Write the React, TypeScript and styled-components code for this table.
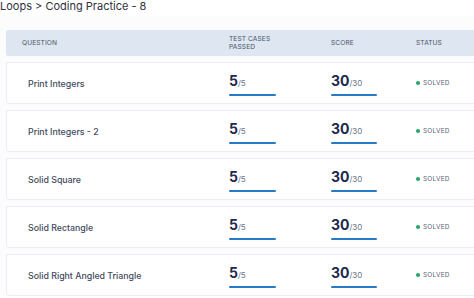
import React from "react";
import styled, { createGlobalStyle } from "styled-components";

const GlobalStyle = createGlobalStyle`
  html, body {
    margin: 0;
    padding: 0;
    background: #ffffff;
    overflow: hidden;
  }
  body {
    font-family: Inter, "Noto Sans", "Liberation Sans", sans-serif;
    -webkit-font-smoothing: antialiased;
  }
`;

const Page = styled.div`
  width: 490px;
  display: flex;
  flex-direction: column;
`;

const Breadcrumb = styled.div`
  font-size: 11px;
  line-height: 12px;
  height: 16px;
  color: #2e3140;
`;

const Board = styled.div`
  background: #fcfcfd;
  padding: 14px 0 0 6px;
  display: flex;
  flex-direction: column;
  gap: 6px;
`;

const columns = "201px 102px 85px 1fr";

const HeaderBar = styled.div`
  display: grid;
  grid-template-columns: ${columns};
  align-items: center;
  height: 26px;
  background: #dee6f1;
  border-radius: 2px;
  padding-left: 22px;
  box-sizing: border-box;
`;

const HeaderCell = styled.div<{ $shift?: number }>`
  font-size: 6.6px;
  line-height: 8.5px;
  letter-spacing: 0.1px;
  text-transform: uppercase;
  color: #465366;
  margin-left: ${(p) => p.$shift ?? 0}px;
`;

const Card = styled.div`
  display: grid;
  grid-template-columns: ${columns};
  align-items: center;
  height: 42px;
  box-sizing: border-box;
  background: #ffffff;
  border: 1px solid #e9edf3;
  border-radius: 3px;
  padding-left: 21px;
`;

const Title = styled.div`
  font-size: 8.8px;
  font-weight: 500;
  color: #3f4a5e;
`;

const Metric = styled.div`
  display: flex;
  flex-direction: column;
  align-items: flex-start;
  padding-top: 4px;
`;

const Value = styled.div`
  color: #1e2a4e;
  line-height: 12px;
  white-space: nowrap;
`;

const Big = styled.span`
  font-size: 14px;
  font-weight: 700;
`;

const Small = styled.span`
  font-size: 8px;
  color: #6a7385;
`;

const Bar = styled.div<{ $width: number }>`
  width: ${(p) => p.$width}px;
  height: 2px;
  margin-top: 5px;
  background: #2a79c4;
  border-radius: 1px;
`;

const Status = styled.div`
  display: flex;
  align-items: center;
  gap: 3px;
  font-size: 6.5px;
  letter-spacing: 0.2px;
  color: #5b6477;
`;

const Dot = styled.span`
  width: 4px;
  height: 4px;
  border-radius: 50%;
  background: #22a46c;
`;

const questions = [
  "Print Integers",
  "Print Integers - 2",
  "Solid Square",
  "Solid Rectangle",
  "Solid Right Angled Triangle",
];

export default function App() {
  return (
    <>
      <GlobalStyle />
      <Page>
        <Breadcrumb>Loops &gt; Coding Practice - 8</Breadcrumb>
        <Board>
          <HeaderBar>
            <HeaderCell $shift={-6}>Question</HeaderCell>
            <HeaderCell>
              Test Cases
              <br />
              Passed
            </HeaderCell>
            <HeaderCell>Score</HeaderCell>
            <HeaderCell>Status</HeaderCell>
          </HeaderBar>
          {questions.map((q) => (
            <Card key={q}>
              <Title>{q}</Title>
              <Metric>
                <Value>
                  <Big>5</Big>
                  <Small>/5</Small>
                </Value>
                <Bar $width={47} />
              </Metric>
              <Metric>
                <Value>
                  <Big>30</Big>
                  <Small>/30</Small>
                </Value>
                <Bar $width={46} />
              </Metric>
              <Status>
                <Dot />
                SOLVED
              </Status>
            </Card>
          ))}
        </Board>
      </Page>
    </>
  );
}
